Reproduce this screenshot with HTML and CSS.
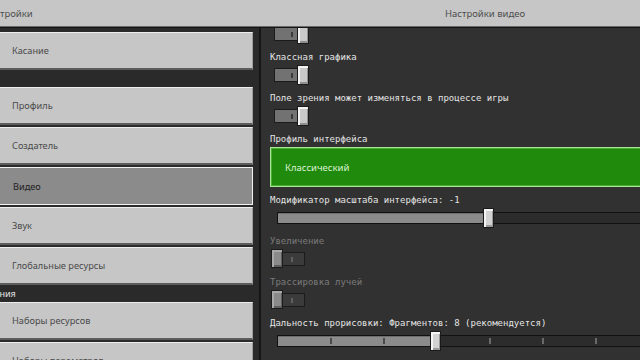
FILE: index.html
```html
<!DOCTYPE html>
<html lang="ru">
<head>
  <meta charset="UTF-8" />
  <meta name="viewport" content="width=device-width, initial-scale=1.0"/>
  <title>Настройки видео</title>
  <link rel="stylesheet" href="styles.css">
</head>
<body>

  <!-- Top bar -->
  <header class="topbar">
    <div class="topbar-left"><span class="crumb">Настройки</span></div>
    <div class="topbar-title">Настройки видео</div>
  </header>

  <main class="layout">

    <!-- Left navigation -->
    <nav class="sidebar">
      <div class="nav-btn">Касание</div>
      <div class="nav-group">Общие</div>
      <div class="nav-btn">Профиль</div>
      <div class="nav-btn">Создатель</div>
      <div class="nav-btn active">Видео</div>
      <div class="nav-btn">Звук</div>
      <div class="nav-btn">Глобальные ресурсы</div>
      <div class="nav-group">Дополнения</div>
      <div class="nav-btn">Наборы ресурсов</div>
      <div class="nav-btn">Наборы параметров</div>
    </nav>

    <!-- Settings panel -->
    <section class="panel">
      <div class="settings">

        <div class="setting">
          <div class="setting-label">Красивое небо</div>
          <div class="toggle on"><span class="track"><span class="tick"></span></span><span class="knob"></span></div>
        </div>

        <div class="setting">
          <div class="setting-label">Классная графика</div>
          <div class="toggle on"><span class="track"><span class="tick"></span></span><span class="knob"></span></div>
        </div>

        <div class="setting">
          <div class="setting-label">Поле зрения может изменяться в процессе игры</div>
          <div class="toggle on"><span class="track"><span class="tick"></span></span><span class="knob"></span></div>
        </div>

        <div class="setting">
          <div class="setting-label">Профиль интерфейса</div>
          <div class="dropdown">Классический</div>
        </div>

        <div class="setting">
          <div class="setting-label">Модификатор масштаба интерфейса: -1</div>
          <div class="slider">
            <span class="slider-track"><span class="slider-fill" style="width: 211px"></span></span>
            <span class="slider-knob" style="left: 206px"></span>
          </div>
        </div>

        <div class="setting disabled">
          <div class="setting-label">Увеличение</div>
          <div class="toggle off"><span class="track"><span class="tick"></span></span><span class="knob"></span></div>
        </div>

        <div class="setting disabled">
          <div class="setting-label">Трассировка лучей</div>
          <div class="toggle off"><span class="track"><span class="tick"></span></span><span class="knob"></span></div>
        </div>

        <div class="setting">
          <div class="setting-label">Дальность прорисовки: Фрагментов: 8 (рекомендуется)</div>
          <div class="slider">
            <span class="slider-track">
              <span class="slider-fill" style="width: 158px"></span>
              <span class="slider-tick filled" style="left: 52px"></span>
              <span class="slider-tick filled" style="left: 105px"></span>
              <span class="slider-tick" style="left: 211px"></span>
              <span class="slider-tick" style="left: 264px"></span>
              <span class="slider-tick" style="left: 317px"></span>
              <span class="slider-tick" style="left: 370px"></span>
            </span>
            <span class="slider-knob" style="left: 153px"></span>
          </div>
        </div>

      </div>
    </section>
  </main>
</body>
</html>
```

FILE: styles.css
```css
html, body {
  margin: 0;
  padding: 0;
  width: 640px;
  height: 360px;
  overflow: hidden;
  background-color: #2a2a2a;
}

body {
  display: flex;
  flex-direction: column;
  font-family: 'Noto Sans', 'DejaVu Sans', sans-serif;
}

/* top bar */
.topbar {
  height: 26px;
  flex-shrink: 0;
  background-color: #c6c6c6;
  border-bottom: 1px solid #6a6a6a;
  display: flex;
  align-items: center;
  font-size: 9.5px;
  color: #4e4e4e;
  white-space: nowrap;
}

.topbar-left {
  width: 259px;
  flex-shrink: 0;
  overflow: hidden;
}

.crumb {
  display: inline-block;
  margin-left: -17px;
}

.topbar-title {
  padding-left: 186px;
}

/* main layout */
.layout {
  flex: 1;
  min-height: 0;
  display: flex;
  border-top: 1px solid #141414;
}

.sidebar {
  width: 259px;
  flex-shrink: 0;
  background-color: #2a2a2a;
  padding-top: 4px;
  display: flex;
  flex-direction: column;
  gap: 2px;
  overflow: hidden;
}

.nav-btn {
  flex-shrink: 0;
  box-sizing: border-box;
  height: 38px;
  width: 273px;
  margin-left: -20px;
  padding-left: 32px;
  display: flex;
  align-items: center;
  background-color: #c6c6c6;
  border-top: 1px solid #ededed;
  border-right: 1px solid #9d9d9d;
  border-bottom: 2px solid #5c5c5c;
  font-size: 9.2px;
  color: #4a4a4a;
}

.nav-btn.active {
  background-color: #8b8b8b;
  border: 1px solid #f2f2f2;
  color: #1e1e1e;
}

.nav-group {
  flex-shrink: 0;
  height: 13px;
  line-height: 13px;
  margin-left: -39px;
  font-size: 9px;
  color: #e6e6e6;
  white-space: nowrap;
}

/* settings panel */
.panel {
  flex: 1;
  min-width: 0;
  background-color: #313131;
  border-left: 2px solid #151515;
  padding-left: 9px;
  overflow: hidden;
}

.settings {
  margin-top: -18px;
}

.setting {
  display: flex;
  flex-direction: column;
  gap: 2px;
  margin-bottom: 7px;
}

.setting-label {
  height: 12px;
  line-height: 12px;
  font-family: 'DejaVu Sans Mono', 'Liberation Mono', monospace;
  font-size: 9px;
  color: #e4e4e4;
  white-space: nowrap;
}

.setting.disabled .setting-label {
  color: #7a7a7a;
}

/* toggles */
.toggle {
  position: relative;
  width: 38px;
  height: 20px;
  margin-left: 1px;
}

.toggle .track {
  position: absolute;
  left: 3px;
  right: 4px;
  top: 3px;
  bottom: 3px;
  box-sizing: border-box;
  background-color: #727272;
  border: 1px solid #1b1b1b;
}

.toggle .tick {
  position: absolute;
  left: 16px;
  top: 4px;
  width: 2px;
  height: 5px;
  background-color: #3a3a3a;
}

.toggle .knob {
  position: absolute;
  top: 0;
  width: 12px;
  height: 20px;
  box-sizing: border-box;
  border: 1px solid #1b1b1b;
}

.toggle.on .knob {
  right: 0;
  background-color: #c9c9c9;
  box-shadow: inset 2px 2px 0 #f2f2f2, inset -1px -2px 0 #8f8f8f;
}

.toggle.off .track {
  background-color: #3b3b3b;
}

.toggle.off .tick {
  background-color: #606060;
}

.toggle.off .knob {
  left: 0;
  height: 19px;
  background-color: #8a8a8a;
  box-shadow: inset 2px 2px 0 #a8a8a8, inset -1px -2px 0 #5e5e5e;
}

/* dropdown */
.dropdown {
  box-sizing: border-box;
  height: 40px;
  margin-right: -20px;
  padding-left: 14px;
  display: flex;
  align-items: center;
  background-color: #1f8a0c;
  border: 1px solid #a6e696;
  box-shadow: inset 0 0 0 1px #4cad36;
  font-size: 9.5px;
  color: #dcf2d2;
}

/* sliders */
.slider {
  position: relative;
  height: 20px;
  margin-left: 7px;
  margin-right: -40px;
}

.slider-track {
  position: absolute;
  left: 0;
  right: 0;
  top: 4px;
  height: 12px;
  box-sizing: border-box;
  background-color: #2c2c2c;
  border: 1px solid #111111;
}

.slider-fill {
  position: absolute;
  left: 0;
  top: 0;
  bottom: 0;
  background-color: #8b8b8b;
  box-shadow: inset 0 1px 0 #6e6e6e;
}

.slider-tick {
  position: absolute;
  top: 2px;
  width: 2px;
  height: 6px;
  background-color: #6a6a6a;
}

.slider-tick.filled {
  background-color: #4a4a4a;
}

.slider-knob {
  position: absolute;
  top: 0;
  width: 11px;
  height: 20px;
  box-sizing: border-box;
  background-color: #d2d2d2;
  border: 1px solid #1a1a1a;
  box-shadow: inset 2px 2px 0 #f4f4f4, inset -1px -2px 0 #9a9a9a;
}
```
